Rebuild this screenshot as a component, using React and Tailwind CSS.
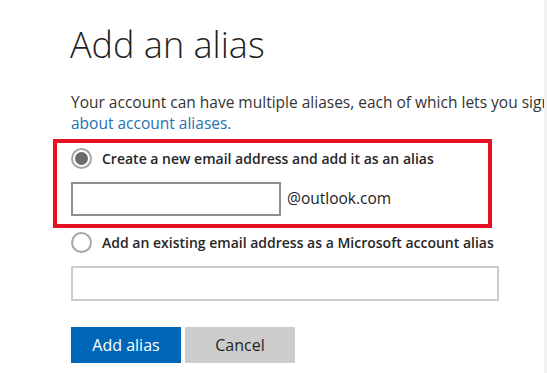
import React, { useState } from "react";

const font = { fontFamily: '"Open Sans", "Noto Sans", sans-serif' };

const Radio = ({ checked, onClick }) => (
  <button
    onClick={onClick}
    className="flex h-[21px] w-[21px] shrink-0 items-center justify-center rounded-full border-2 border-[#a6a6a6] bg-white"
  >
    {checked && <span className="h-[13px] w-[13px] rounded-full bg-[#6b6b6b]" />}
  </button>
);

export default function App() {
  const [choice, setChoice] = useState("new");

  return (
    <div className="flex h-[373px] w-[547px] overflow-hidden bg-white text-[#262626]" style={font}>
      <div className="min-w-0 flex-1 overflow-hidden">
        {/* TITLE */}
        <h1 className="pl-[70px] pt-[21px] text-[36px] font-light leading-[48px] text-[#1f1f1f]">
          Add an alias
        </h1>

        {/* INTRO */}
        <div className="mt-[23px] whitespace-nowrap pl-[71px] text-[15.5px] leading-[21px] text-[#333]">
          <p>
            Your account can have multiple aliases, each of which lets you sign in with the same
            password. <a className="text-[#2672b0]">Learn more</a>
          </p>
          <a className="text-[#2672b0]">about account aliases.</a>
        </div>

        {/* NEW ADDRESS */}
        <div className="ml-[53px] mt-[5px] w-[439px] border-4 border-[#e81123] pb-[8px] pl-[14px] pt-[5px]">
          <div className="flex items-center gap-[10px]">
            <Radio checked={choice === "new"} onClick={() => setChoice("new")} />
            <span className="text-[14px] font-semibold">
              Create a new email address and add it as an alias
            </span>
          </div>
          <div className="mt-[13px] flex items-center gap-[6px]">
            <input className="h-[34px] w-[210px] border-2 border-[#8f8f8f] bg-white px-2 outline-none" />
            <span className="text-[15.5px] text-[#222]">@outlook.com</span>
          </div>
        </div>

        {/* EXISTING ADDRESS */}
        <div className="pl-[71px]">
          <div className="mt-[4px] flex items-center gap-[10px]">
            <Radio checked={choice === "existing"} onClick={() => setChoice("existing")} />
            <span className="text-[14px] font-semibold">
              Add an existing email address as a Microsoft account alias
            </span>
          </div>
          <input className="mt-[13px] h-[35px] w-[428px] border-2 border-[#cccccc] bg-white px-2 outline-none" />

          {/* ACTIONS */}
          <div className="mt-[26px] flex gap-[4px]">
            <button className="h-[36px] w-[110px] bg-[#0067b8] text-[16px] text-white">Add alias</button>
            <button className="h-[36px] w-[110px] bg-[#cccccc] text-[16px] text-[#1f1f1f]">Cancel</button>
          </div>
        </div>
      </div>
      <div className="w-[3px] shrink-0 bg-[#f2f2f2]" />
    </div>
  );
}
